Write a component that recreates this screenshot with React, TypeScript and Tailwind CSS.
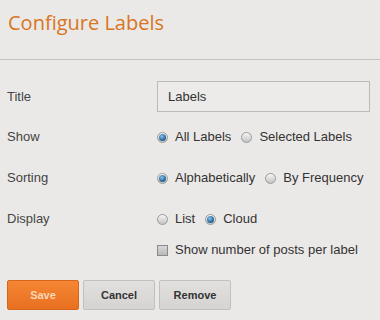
import React from "react";

const sans = { fontFamily: '"Liberation Sans", Arial, sans-serif' };

function Radio({ checked }: { checked?: boolean }) {
  return (
    <span className="relative inline-flex h-[11px] w-[11px] shrink-0 items-center justify-center rounded-full border border-[#9a9a9a] bg-gradient-to-b from-[#f6f6f6] to-[#c4c4c4]">
      {checked && (
        <span className="h-[7px] w-[7px] rounded-full bg-[radial-gradient(circle_at_40%_35%,#8cc3ea_0%,#2f6fa3_55%,#173f63_100%)]" />
      )}
    </span>
  );
}

function Option({ checked, label }: { checked?: boolean; label: string }) {
  return (
    <label className="flex items-center gap-[7px]">
      <Radio checked={checked} />
      <span>{label}</span>
    </label>
  );
}

function Row({ label, className, children }: { label?: string; className: string; children: React.ReactNode }) {
  return (
    <div className={`flex items-center ${className}`}>
      <div className="w-[157px] shrink-0 pl-[7px] text-[#444]">{label}</div>
      <div className="flex flex-1 items-center gap-[10px] text-[#333]">{children}</div>
    </div>
  );
}

export default function App() {
  return (
    <div className="h-[320px] w-[380px] overflow-hidden bg-[#ebe9e7] text-[13px]" style={sans}>
      <div className="h-[60px] border-b border-[#c6c2c0] pl-[8px] pt-[9px]">
        <h1 className="text-[20px] leading-[28px] text-[#d7761f]" style={{ fontFamily: '"Open Sans", sans-serif' }}>
          Configure Labels
        </h1>
      </div>

      <Row label="Title" className="mt-[21px] h-[31px]">
        <div className="flex h-[31px] w-[213px] items-center border border-[#bdb9b6] bg-[#edebe9] pl-[10px] text-[#333]">
          Labels
        </div>
      </Row>

      <Row label="Show" className="mt-[13px] h-[24px]">
        <Option checked label="All Labels" />
        <Option label="Selected Labels" />
      </Row>

      <Row label="Sorting" className="mt-[17px] h-[24px]">
        <Option checked label="Alphabetically" />
        <Option label="By Frequency" />
      </Row>

      <Row label="Display" className="mt-[17px] h-[24px]">
        <Option label="List" />
        <Option checked label="Cloud" />
      </Row>

      <Row className="mt-[7px] h-[24px]">
        <label className="flex items-center gap-[7px]">
          <span className="h-[11px] w-[11px] shrink-0 border border-[#8a8a8a] bg-gradient-to-b from-[#d8d8d8] to-[#b9b9b9]" />
          <span>Show number of posts per label</span>
        </label>
      </Row>

      <div className="mt-[18px] flex gap-[4px] pl-[7px]">
        <button className="h-[30px] w-[72px] rounded-[2px] border border-[#d5661c] bg-gradient-to-b from-[#f58634] to-[#e8701f] text-[11px] font-bold text-[#fbd6b6]">
          Save
        </button>
        <button className="h-[30px] w-[72px] rounded-[2px] border border-[#c2c0be] bg-gradient-to-b from-[#e2e0de] to-[#d6d4d2] text-[11px] font-bold text-[#333]">
          Cancel
        </button>
        <button className="h-[30px] w-[72px] rounded-[2px] border border-[#c2c0be] bg-gradient-to-b from-[#e2e0de] to-[#d6d4d2] text-[11px] font-bold text-[#333]">
          Remove
        </button>
      </div>
    </div>
  );
}
